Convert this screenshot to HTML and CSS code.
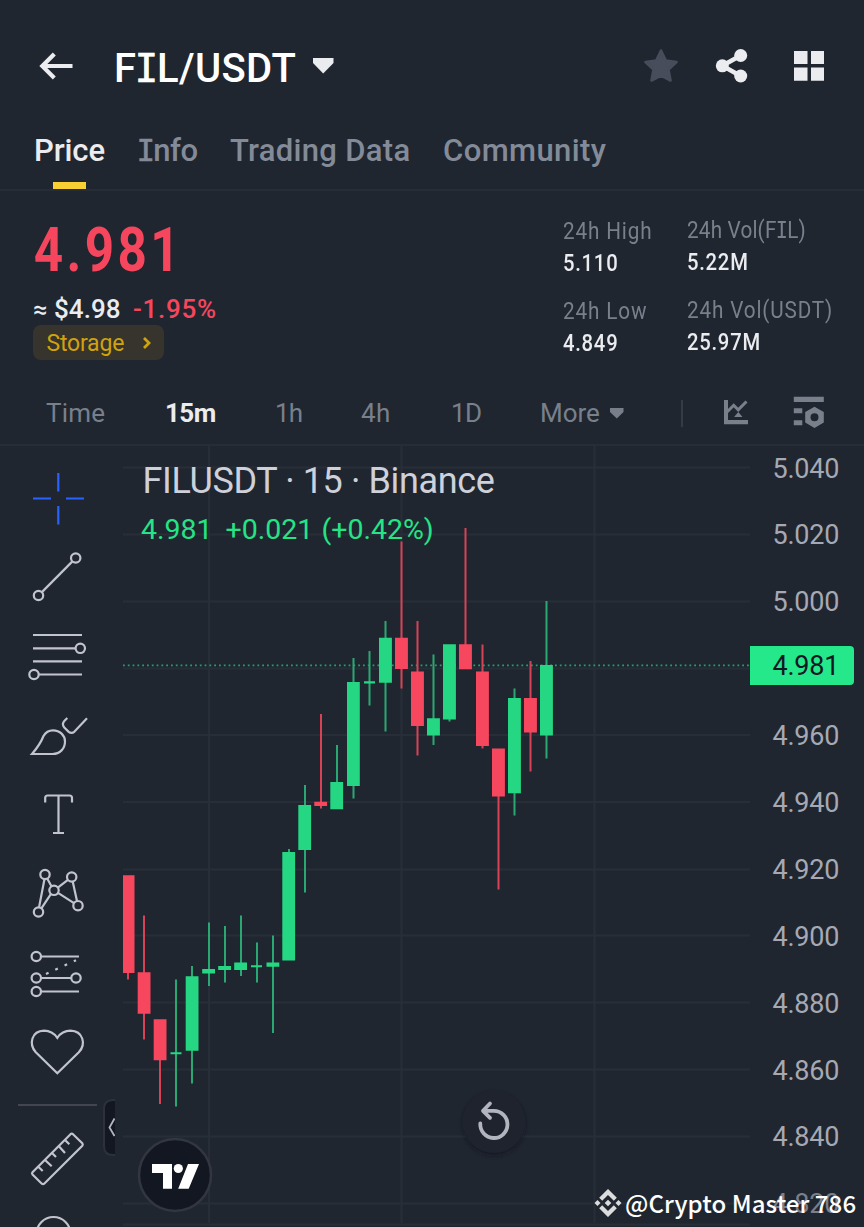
FILE: index.html
```html
<!DOCTYPE html>
<html lang="en">
<head>
<meta charset="utf-8">
<title>FIL/USDT</title>
<link rel="stylesheet" href="styles.css">
</head>
<body>
<div class="app">
  <header class="header">
    <svg class="back" width="36" height="30" viewBox="38 51 36 30"><path d="M54.300 54L42.300 66L54.300 78M43 66H72.500" fill="none" stroke="#eaecef" stroke-width="4.200"/></svg>
    <h1 class="pair">F<span class="slab">I</span>L/USDT</h1>
    <svg class="pair-caret" width="21" height="16" viewBox="0 0 21 16"><path d="M0 0H20.500V5L10.200 15.500L0 5Z" fill="#eaecef"/></svg>
    <div class="actions">
      <svg width="34" height="36" viewBox="644 48 34 36"><path d="M661 50.500L665.800 60.500L676.500 62L668.500 69.500L670.500 80.500L661 75.500L651.500 80.500L653.500 69.500L645.500 62L656.200 60.500Z" fill="#474d5a" stroke="#474d5a" stroke-width="2.600" stroke-linejoin="round"/></svg>
      <svg width="34" height="36" viewBox="718 48 34 36" overflow="visible"><g fill="#eaecef"><circle cx="740.700" cy="55.500" r="6.500"/><circle cx="722.300" cy="65.800" r="6.500"/><circle cx="740.700" cy="76" r="6.500"/></g><path d="M740.700 55.500L722.300 65.800L740.700 76" fill="none" stroke="#eaecef" stroke-width="4.500"/></svg>
      <svg width="34" height="36" viewBox="792 48 34 36"><path d="M794 51H807.500V64H794ZM811 51H824V64H811ZM794 67.500H807.500V80.700H794ZM811 67.500H824V80.700H811Z" fill="#eaecef"/></svg>
    </div>
  </header>

  <nav class="tabs">
    <a class="tab tab-on">Price</a>
    <a class="tab t-info"><span class="slab">I</span>nfo</a>
    <a class="tab t-data">Trading Data</a>
    <a class="tab">Community</a>
  </nav>

  <section class="summary">
    <div class="quote">
      <div class="last">4.981</div>
      <div class="change"><span class="approx">≈</span><span class="fiat">$4.98</span><span class="pct">-1.95%</span></div>
      <a class="tag"><span>Storage</span><svg width="10" height="14" viewBox="0 0 10 14"><path d="M2 2L7 7L2 12" fill="none" stroke="#d0a30c" stroke-width="2.800"/></svg></a>
    </div>
    <dl class="stats">
      <dt>24h High</dt><dd>5.110</dd>
      <dt>24h Low</dt><dd>4.849</dd>
    </dl>
    <dl class="stats stats-vol">
      <dt class="vol-fil">24h Vol(F<span class="slab">I</span>L)</dt><dd>5.22M</dd>
      <dt>24h Vol(USDT)</dt><dd>25.97M</dd>
    </dl>
  </section>

  <nav class="frames">
    <a class="f-time">Time</a>
    <a class="f-15">15m</a>
    <a class="f-1h">1h</a>
    <a class="f-4h">4h</a>
    <a class="f-1d">1D</a>
    <a class="f-more">More</a>
    <svg class="more-caret" width="14" height="11" viewBox="0 0 14 11"><path d="M0 0H13.500V4L6.800 10.500L0 4Z" fill="#787f8b"/></svg>
    <span class="divider"></span>
    <svg class="kline" width="26" height="26" viewBox="723 398 26 26"><path d="M724 399H728V419H748V423.200H724Z" fill="#78808c"/><path d="M727 411L733.700 404.300L738.200 408.800L746.500 400.500" fill="none" stroke="#78808c" stroke-width="3"/><path d="M738.300 411L742.500 416H734.100Z" fill="#78808c"/></svg>
    <svg class="settings" width="32" height="32" viewBox="793 397 32 32" overflow="visible"><path d="M793.800 396.800H823.800V402H793.800ZM793.800 408.300H802.300V413.300H793.800ZM793.800 420.300H802.300V425.300H793.800Z" fill="#78808c"/><path fill-rule="evenodd" d="M814.500 406.800L823.800 412V422.500L814.500 428L805.200 422.500V412ZM814.500 413.200A4 4 0 1 0 814.500 421.200A4 4 0 1 0 814.500 413.200Z" fill="#78808c"/></svg>
  </nav>

  <main class="workspace">
    <aside class="tools">
      <svg class="tool tool-on" viewBox="26 460 64 79"><path d="M58.300 473V491.500M58.300 506V524.500M33 498.500H51M66 498.500H84"/></svg>
      <svg class="tool" viewBox="26 539 64 79"><circle cx="75.700" cy="558" r="4.700"/><circle cx="38.500" cy="595.500" r="4.700"/><path d="M72.400 561.400L41.900 592.100"/></svg>
      <svg class="tool" viewBox="26 618 64 79"><circle cx="80.300" cy="648.300" r="4.700"/><circle cx="34" cy="674.500" r="4.700"/><path d="M33 635H82M33 648.300H75.500M33 661.300H82M39 674.500H82"/></svg>
      <svg class="tool" viewBox="26 697 64 79"><path d="M32 754C38 747 41 742.500 43.500 736C46 731.500 49.500 730.300 53 730.300C60 730.300 65 735.500 65 741.500C65 748.500 60 754 52.500 754Z"/><path d="M67.300 718L64.300 721Q61.500 724 64.300 727.500L68.700 731.800Q71.500 734 74.300 731.800L87 718.300"/></svg>
      <svg class="tool" viewBox="26 776 64 79"><path d="M45.200 802.500V798Q45.200 795.500 47.700 795.500H69.500Q72 795.500 72 798V802.500M58.500 795.500V833M53 833H64"/></svg>
      <svg class="tool" viewBox="26 855 64 79"><circle cx="45" cy="874.500" r="4.700"/><circle cx="71.700" cy="877" r="4.700"/><circle cx="54" cy="890.300" r="4.700"/><circle cx="78" cy="905.700" r="4.700"/><circle cx="38.500" cy="912" r="4.700"/><path d="M44.500 879L39 907.500M47.200 878.500L51.600 886.500M51 893.900L41.400 908.400M57.800 887.600L67.900 879.900M58 892.900L74 903.100M72.700 881.500L77 901.100"/></svg>
      <svg class="tool" viewBox="26 934 64 79"><circle cx="36.300" cy="956.500" r="4.700"/><circle cx="36.300" cy="978" r="4.700"/><circle cx="76" cy="978" r="4.700"/><circle cx="36.300" cy="991.500" r="4.700"/><path d="M41 956.500H79M41 978H71.300M41 991.500H79"/><path stroke-dasharray="2.800 7.400" d="M46 974L76 960.300"/></svg>
      <svg class="tool" viewBox="26 1013 64 79"><path d="M57.300 1073.300L35.800 1052.300C28.500 1044 31.500 1031 44 1030.600C50 1030.600 54 1033 57.300 1037.800C60.500 1033 64.500 1030.600 70.500 1030.600C83 1031 86.500 1044 78.800 1052.300Z"/></svg>
      <hr class="tool-rule">
      <svg class="tool tool-ruler" viewBox="26 1106 64 94"><path d="M73 1134.200L82.300 1143.300Q83.300 1144.500 82.300 1145.700L44.200 1183.700Q43 1184.700 41.800 1183.700L32.500 1174.500Q31.500 1173.300 32.500 1172.200L70.500 1134.200Q71.700 1133.200 73 1134.200ZM65 1140L69.300 1144.300M58.700 1146L65 1153M51.700 1152.700L56 1157M45 1160L51.700 1166.300M38.300 1166.700L42.700 1171"/></svg>
      <svg class="tool tool-zoom" viewBox="26 1200 64 27"><circle cx="53.500" cy="1234" r="17"/></svg>
      <svg class="collapse" width="13" height="60" viewBox="102 1098 13 60"><path d="M116 1100H113Q104 1100 104 1109V1146Q104 1155 113 1155H116Z" fill="#131722" stroke="#2c313c" stroke-width="2"/><path d="M114.500 1118.500L109.500 1127.500L114.500 1136" fill="none" stroke="#b2b5be" stroke-width="1.800"/></svg>
    </aside>

    <section class="chart">
      <svg class="plot" width="627" height="781" viewBox="123 446 627 781">
        <path class="grid" d="M123 467.500H750M123 534.500H750M123 601.500H750M123 668.500H750M123 735H750M123 802H750M123 869.500H750M123 935.500H750M123 1002.500H750M123 1069.500H750M123 1136.500H750M123 1203.500H750M123 1224.500H750M209 446V1223M401.500 446V1223M594.500 446V1223"/>
        <path class="last-line" d="M123 665.300H750"/>
        <path class="wick up" d="M176 979.500V1106.500M192 966V1083.500M209 922.500V986M225 926V982.500M241 915.500V976M257 942.500V982.500M273 935.500V1033M289 849V860M305 785V892.500M337 745V790M353.500 658V798.500M369.500 651V705.500M385.500 621V731.500M433.500 654.500V745M449.500 700V721.500M514.500 688.500V815.500M546.500 601V758.500"/>
        <path class="wick down" d="M128 900V979.500M144 915.500V1039.500M160 1040V1104M321 714V808.500M401.500 541.500V688.500M417.500 621V755.500M465.500 528V650M482.500 644.500V748.500M498.500 780V889.500M530.500 661V771.500"/>
        <path class="body up" d="M170.500 1052.200h11v2h-11zM185.700 976.200h12.800v74.500h-12.800zM202.200 969h12.800v4.500h-12.800zM218.200 966h12.800v4h-12.800zM234.200 962.500h12.800v7.500h-12.800zM251 965.300h11v2h-11zM266.500 962.500h12.800v4.300h-12.800zM282.300 852h12.800v108.500h-12.800zM298.300 805h12.800v45h-12.800zM330.300 782h12.800v27.300h-12.800zM347 682h12.800v104h-12.800zM364 681.300h11v2.300h-11zM379 637.700h12.900v45h-12.900zM427 718.300h12.900v17.300h-12.900zM443 644.300h12.900v75.300h-12.900zM508 698h12.900v95.300h-12.900zM540 665h12.900v70.500h-12.900z"/>
        <path class="body down" d="M123 875.300h11.500v97.700h-11.500zM137.700 972.300h12.800v41.500h-12.800zM153.700 1019.300h12.800v41h-12.800zM314.300 801.700h12.800v4.300h-12.800zM395 637.700h12.900v31.300h-12.900zM411 671.500h12.900v54.500h-12.900zM459 644.300h12.900v24.900h-12.900zM476 671.500h12.900v74.500h-12.900zM492 748.500h12.900v48h-12.900zM524 698h12.900v34.500h-12.900z"/>
      </svg>
      <div class="legend">
        <div class="symbol">FILUSDT · 15 · Binance</div>
        <div class="ohlc"><span class="close">4.981</span><span class="delta">+0.021</span><span>(+0.42%)</span></div>
      </div>
      <svg class="reset" width="80" height="84" viewBox="454 1082 80 84"><defs><filter id="soft" x="-30%" y="-30%" width="160%" height="160%"><feGaussianBlur stdDeviation="2"/></filter></defs><circle cx="494" cy="1124" r="31" fill="#151923" opacity=".8" filter="url(#soft)"/><circle cx="494" cy="1121.500" r="31.500" fill="#1f232e"/><path d="M484 1110.800H493.700A13.600 13.600 0 1 1 480.300 1123.500M490 1103.500L483 1110.800L490 1117.800" fill="none" stroke="#b2b5be" stroke-width="3.800" stroke-linecap="round" stroke-linejoin="round"/></svg>
      <svg class="tv" width="76" height="76" viewBox="137 1137 76 76"><circle cx="175" cy="1175" r="36" fill="#131722" stroke="#32363f" stroke-width="2.500"/><path d="M152 1164H172V1188.700H163V1173H152ZM188 1164H199L188.700 1188.700H178.200Z" fill="#fff"/><circle cx="178.300" cy="1168.500" r="4.600" fill="#fff"/></svg>
    </section>

    <aside class="axis">
      <span>5.040</span><span>5.020</span><span>5.000</span><span class="axis-last"><b>4.981</b></span><span>4.960</span><span>4.940</span><span>4.920</span><span>4.900</span><span>4.880</span><span>4.860</span><span>4.840</span><span class="axis-dim">4.820</span>
    </aside>
  </main>

  <div class="credit">
    <svg width="28" height="28" viewBox="594 1189 28 28"><path d="M600.700 1199.200L608 1192L615.300 1199.200M600.700 1206.800L608 1214L615.300 1206.800" fill="none" stroke="#dcdcdc" stroke-width="4.300"/><path d="M597.500 1200L600.500 1203L597.500 1206L594.500 1203ZM618.500 1200L621.500 1203L618.500 1206L615.500 1203ZM608 1199.700L611.300 1203L608 1206.300L604.700 1203Z" fill="#dcdcdc"/></svg>
    <span>@Crypto Master 786</span>
  </div>
</div>
</body>
</html>
```
FILE: styles.css
```css
* { box-sizing: border-box; }
body { margin: 0; background: #202630; font-family: Roboto, "Noto Sans", sans-serif; color: #eaecef; }
.app { position: relative; width: 864px; height: 1227px; overflow: hidden; }
svg { display: block; flex: none; }
.slab { margin: 0 -.04em; font-family: "DejaVu Sans Mono", monospace; font-size: .97em; }

.header { display: flex; align-items: center; height: 132px; padding: 0 38px; white-space: nowrap; }
.pair { margin: 5px 0 0 40px; width: 199px; font-size: 40px; font-weight: 500; line-height: 48px; letter-spacing: .35px; color: #fff; }
.pair .slab, .t-info .slab { -webkit-text-stroke: .7px currentColor; }
.actions { display: flex; margin-left: auto; gap: 40px; }

.tabs { display: flex; height: 59px; border-bottom: 2px solid #272d37; padding-left: 34px; font-size: 31px; font-weight: 500; line-height: 38px; letter-spacing: .4px; color: #848b98; white-space: nowrap; }
.tab-on { width: 104px; letter-spacing: -.1px; color: #eaecef; }
.tab-on::after { content: ""; display: block; width: 33px; height: 7px; margin: 12px 0 0 19px; background: #f8d033; }
.t-info { width: 92px; letter-spacing: -.5px; }
.t-data { width: 213px; letter-spacing: .3px; }

.summary { display: flex; height: 191px; padding: 24px 0 0 33px; white-space: nowrap; }
.quote { width: 530px; }
.last { width: 200px; padding-left: 1px; font-size: 61px; font-weight: 700; line-height: 71px; letter-spacing: 4px; color: #f6465d; transform: scaleX(.84); transform-origin: 0 0; }
.change { display: flex; height: 40px; line-height: 47px; font-size: 26px; font-weight: 500; }
.approx { width: 21px; font-size: 25px; }
.fiat { width: 79px; letter-spacing: .05px; }
.pct { letter-spacing: .7px; color: #f6465d; }
.tag { display: flex; align-items: center; width: 131px; height: 35px; margin-top: -1px; padding-left: 13.500px; border-radius: 8px; background: #36342d; color: #d0a30c; font-size: 23px; line-height: 35px; letter-spacing: -.2px; }
.tag span { width: 95px; padding-top: 2px; }
.stats { width: 124px; margin: 1px 0 0; line-height: 31px; font-size: 23px; letter-spacing: .950px; }
.stats dt { color: #78808c; transform: scaleX(.9); transform-origin: 0 0; }
.stats dd { margin: 0 0 18px; padding-top: 1px; height: 31px; font-weight: 500; letter-spacing: .850px; transform: scaleX(.88); transform-origin: 0 0; }
.stats-vol { width: 170px; margin-top: 0; }
.stats .vol-fil { letter-spacing: .2px; }

.frames { display: flex; align-items: center; height: 64px; border-bottom: 2px solid #272d37; padding-left: 46px; font-size: 26px; color: #78808c; white-space: nowrap; }
.f-time { width: 119px; letter-spacing: .2px; }
.f-15 { width: 110px; color: #eaecef; font-weight: 700; letter-spacing: -.6px; }
.f-1h { width: 86px; letter-spacing: -.8px; }
.f-4h { width: 90px; letter-spacing: .3px; }
.f-1d { width: 89px; letter-spacing: -.7px; }
.f-more { width: 70px; }
.divider { width: 2px; height: 27px; margin-left: 57px; background: #353b46; }
.kline { margin: -2px 44px 0 40px; }

.workspace { display: grid; grid-template-columns: 123px 627px 114px; height: 781px; }
.tools { position: relative; display: flex; flex-direction: column; padding: 14px 0 0 26px; }
.tool { width: 64px; height: 79px; fill: none; stroke: #c1c4cd; stroke-width: 2.200; }
.tool-on { stroke: #2962ff; }
.tool-rule { width: 79px; height: 2px; margin: 12px 0 0 -8px; border: 0; background: #434651; }
.tool-ruler { height: 94px; }
.tool-zoom { height: 27px; }
.collapse { position: absolute; left: 102px; top: 652px; }

.chart { position: relative; }
.grid { stroke: #282e38; stroke-width: 2; }
.last-line { stroke: #25a06b; stroke-width: 1.800; stroke-dasharray: 1.800 3; }
.wick { stroke-width: 2; }
.wick.up { stroke: #2aa873; }
.wick.down { stroke: #d74257; }
.body.up { fill: #25d782; }
.body.down { fill: #f7475e; }
.legend { position: absolute; left: 18px; top: 12px; white-space: nowrap; }
.symbol { padding-left: 1.500px; font-size: 36px; line-height: 47px; height: 48px; letter-spacing: -.38px; color: #ced1da; }
.ohlc { display: flex; font-size: 28.500px; line-height: 48px; color: #24e486; }
.close { width: 84.500px; }
.delta { width: 96px; }
.reset { position: absolute; left: 331px; top: 636px; }
.tv { position: absolute; left: 14px; top: 691px; }

.axis { display: flex; flex-direction: column; gap: 22.900px; padding: .5px 0 0 22.500px; font-size: 27px; letter-spacing: -.25px; color: #a6a9b3; overflow: hidden; }
.axis span { flex: none; height: 44px; line-height: 44px; }
.axis .axis-last { display: flex; align-items: center; margin-left: -22.500px; color: #131722; }
.axis .axis-dim { color: #7b7f89; }
.axis-last b { width: 104px; height: 39px; margin-top: -7px; padding-left: 22.500px; border-radius: 0 4px 4px 0; background: #24e88a; font-weight: 400; line-height: 40px; }

.credit { position: absolute; left: 594px; bottom: 10px; display: flex; align-items: center; gap: 3px; color: #fff; font: 500 24px/28px "Noto Sans CJK SC", sans-serif; letter-spacing: .08px; white-space: nowrap; }
```
